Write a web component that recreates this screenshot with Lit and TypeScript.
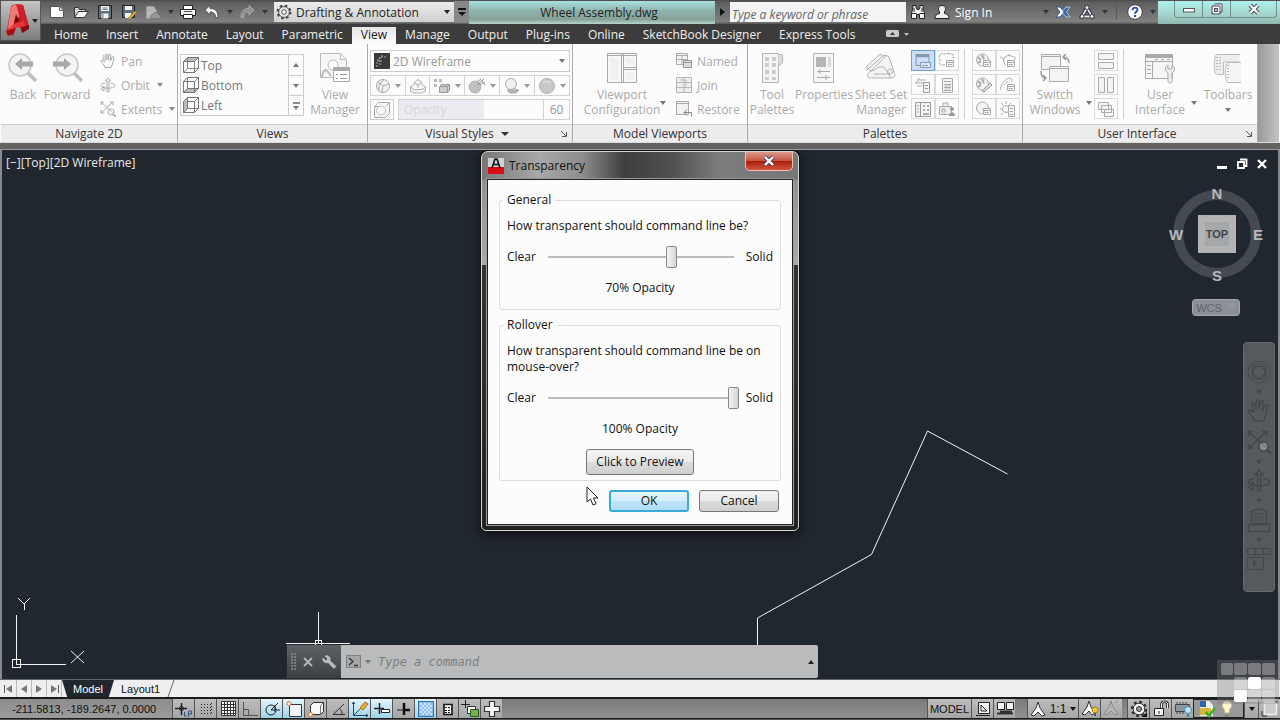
import { LitElement, html, css, svg, nothing, TemplateResult, SVGTemplateResult } from "lit";
import { customElement, state } from "lit/decorators.js";

type Art = SVGTemplateResult;
const panelMini = svg`<path d="M8.5 8.5h7v6h-7zM8.5 10.5h7M10 12.5h4" fill="#fafafa" stroke="#aaa"/>`;

const ICONS: Record<string, [number, number, Art]> = {
  logo: [40, 40, svg`<path d="M6 30L10 5l5-2 7 1 6 22-7 6-3-8-3 2-3 9z" fill="#b8141b"/><path d="M7 27L10 6l5-3 6 1 1 6-5 7-3 1-3 11z" fill="#ee7d7a"/><path d="M15 3l7 1 6 22-6 3z" fill="#cf2028"/><path d="M5 30l8-7 9-3 3 5-11 2-7 7z" fill="#e8353a"/><path d="M5 30l2 5 5-2 3-6z" fill="#a30d13"/><path d="M21 26l7-2v4l-7 4z" fill="#86090e"/><path d="M15 13l3 7-5 2z" fill="#6d0a0e"/><path d="M31 18h6l-3 4z" fill="#222"/>`],
  new: [16, 16, svg`<path d="M1.500 2.500h9l4 4v7h-13z" fill="#fff" stroke="#555"/><path d="M10.500 2.500v4h4" fill="#ddd" stroke="#666"/>`],
  open: [16, 16, svg`<path d="M1.500 13.500v-10h4l1 2h6v3" fill="#cfd6dc" stroke="#333"/><path d="M1.500 13.500l4-6h10l-4 6z" fill="#f4f6f8" stroke="#333"/>`],
  save: [16, 16, svg`<path d="M1.500 1.500h13v13h-13z" fill="#5f6c7a" stroke="#222"/><path d="M4 2h8v5H4zM4.500 9.500h7v5h-7z" fill="#f2f2f2"/><path d="M5.500 4h5M5.500 5.500h5M6 10v4" stroke="#778"/>`],
  saveas: [16, 16, svg`<path d="M1.500 1.500h12v12h-12z" fill="#5f6c7a" stroke="#222"/><path d="M4 2h7v4H4zM4 9h6v5H4z" fill="#f2f2f2"/><path d="M7 14l7-7 1.500 1.500-7 7z" fill="#e8b23a" stroke="#a36c10" stroke-width=".6"/>`],
  cloud: [16, 16, svg`<path d="M1.500 2.500h7l3 4v8h-10z" fill="#b5b5b5" stroke="#999"/><path d="M6 14.500c-1-3 1-4 2-4 1-3 5-2 5 0 3 0 3 4 1 4z" fill="#9b9b9b" stroke="#777"/>`],
  print: [18, 16, svg`<path d="M4.500 5.500v-4h9v4" fill="#fff" stroke="#222"/><path d="M1.500 5.500h15v6h-15z" fill="#f2f2f2" stroke="#222"/><path d="M4.500 10.500h9v4h-9z" fill="#fff" stroke="#222"/><path d="M5 7.500h8" stroke="#555"/>`],
  undo: [16, 16, svg`<path d="M1 6l5-4.500V4.500c5 0 8 2 8 9l-2.500 0c0-4-2-5.500-5.500-5.500v3z" fill="#f2f2f2" stroke="#444" stroke-width=".8"/>`],
  redo: [16, 16, svg`<path d="M15 6l-5-4.500V4.500c-5 0-8 2-8 9l2.500 0c0-4 2-5.500 5.500-5.500v3z" fill="#8e8e8e" stroke="#b5b5b5" stroke-width=".8"/>`],
  gear: [16, 16, svg`<circle cx="8" cy="8" r="6.300" fill="none" stroke="#444" stroke-width="2.200" stroke-dasharray="2.500 2.450"/><circle cx="8" cy="8" r="5.400" fill="#e8e8e8" stroke="#555"/><circle cx="8" cy="8" r="2.300" fill="#f7f7f7" stroke="#555"/>`],
  find: [16, 16, svg`<path d="M1.500 14.500v-5l1.500-6v-2h3v2l1 2h2l1-2v-2h3v2l1.500 6v5h-5v-4h-3v4z" fill="#f4f4f4" stroke="#222"/><path d="M1.500 9.500h5M9.500 9.500h5M4 4v4M12 4v4" stroke="#222"/>`],
  user: [16, 16, svg`<path d="M5.500 8c-2-3-1-6.500 2.500-6.500s4.500 3.500 2.500 6.500l0 1.500c3 .5 4.500 2 4.500 5H1c0-3 1.500-4.500 4.500-5z" fill="#eee" stroke="#222"/>`],
  xchg: [16, 16, svg`<path d="M1 3h4l3 3.500 1 1.500-1 1.500L5 13H1l4-5z" fill="#fff" stroke="#33508f"/><path d="M15 3h-4L8 6.500 7.500 8 8 9.500l3 3.500h4l-3.500-5z" fill="#3f66b5" stroke="#dfe8fa" stroke-width=".7"/>`],
  a360: [16, 16, svg`<path d="M8 4L3 12.500h10z" fill="none" stroke="#223" stroke-width="3.500"/><path d="M8 4L3 12.500h10z" fill="none" stroke="#dfe6f5" stroke-width="1.800"/><circle cx="8" cy="3.500" r="2" fill="#fff" stroke="#334"/><circle cx="3" cy="12.500" r="2" fill="#fff" stroke="#334"/><circle cx="13" cy="12.500" r="2" fill="#fff" stroke="#334"/>`],
  help: [16, 16, svg`<circle cx="8" cy="8" r="7.300" fill="#fff" stroke="#444"/><path d="M5.500 6.200c0-3.600 5-3.200 5-.4 0 2-2.500 2-2.500 4" fill="none" stroke="#2756a8" stroke-width="1.900"/><circle cx="8" cy="12" r="1.200" fill="#2756a8"/>`],
  min: [14, 12, svg`<rect x="1.500" y="5.500" width="11" height="3.500" fill="#fff" stroke="#556"/>`],
  restore: [14, 12, svg`<path d="M4.500 1h7.500v8h-2M2 3h8v8H2z" fill="#fff" stroke="#445"/><path d="M4.500 5.500h3v3h-3z" fill="#9cc" stroke="#445"/>`],
  close: [14, 12, svg`<path d="M3 2l8 8M11 2l-8 8" stroke="#445" stroke-width="4.200"/><path d="M3 2l8 8M11 2l-8 8" stroke="#fff" stroke-width="2.400"/>`],
  ribmin: [24, 10, svg`<rect x="0" y="1" width="13" height="7" rx="1.500" fill="#c9c9c9"/><path d="M4 6l2.500-3L9 6z" fill="#333"/><path d="M18 4h5l-2.500 3z" fill="#bbb"/>`],
  back: [32, 32, svg`<circle cx="13" cy="13" r="11" fill="#f4f4f4" stroke="#c8c8c8" stroke-width="1.600"/><path d="M21 21l8 8" stroke="#bdbdbd" stroke-width="3.600"/><path d="M8 12l7-6v3.500h11v5h-11V18z" fill="#a8a8a8"/>`],
  forward: [32, 32, svg`<circle cx="16" cy="13" r="11" fill="#f4f4f4" stroke="#c8c8c8" stroke-width="1.600"/><path d="M23 21l8 8" stroke="#bdbdbd" stroke-width="3.600"/><path d="M20 12l-7-6v3.500H2v5h11V18z" fill="#a8a8a8"/>`],
  hand: [16, 16, svg`<path d="M5 14.500C4 11 1 9.500 1 8s2-1 3.500 1L3 3.500c0-1.500 1.500-1.500 2 0L6 7V2c0-1.500 1.800-1.500 2 0v5l1-5c.3-1.300 2-1 1.800.3L10.300 8l2-4c.7-1.200 2-.5 1.600.8-1 3-1 6.500-3 9.700z" fill="none" stroke="currentColor"/>`],
  orbit: [16, 16, svg`<path d="M8 .800l2.500 3H9v11H7v-11H5.500z" fill="none" stroke="currentColor"/><path d="M5 6C2 6.500 1 7.500 1 8.500c0 3 10 3.500 13 1.500 2-1.500 1-3-3-4M1 12l3-3v5z" fill="none" stroke="currentColor"/>`],
  extents: [16, 16, svg`<path d="M1 1l12 11M13 1L1 12M1 4V1h3M10 1h3v3M1 9v3h3" fill="none" stroke="currentColor"/><circle cx="11" cy="11" r="3" fill="#fff" fill-opacity=".3" stroke="currentColor"/><path d="M13 13l3 3" stroke="currentColor" stroke-width="1.600"/>`],
  cubetop: [16, 16, svg`<path d="M.500 4.500l4-4h11v11l-4 4H.500z" fill="none" stroke="#777"/><path d="M.500 4.500l4-4h11l-4 4z" fill="#bbb" stroke="#777"/><path d="M11.500 4.500v11M4.500 1v10.500h11M4.500 11.500l-4 4" stroke="#888" fill="none"/>`],
  cubebottom: [16, 16, svg`<path d="M.500 15.500l4-4h11l-4 4z" fill="#bbb" stroke="#777"/><path d="M.500 4.500l4-4h11v11l-4 4H.500zM.500 4.500h11l4-4M11.500 4.500v11M4.500 1v10.500" fill="none" stroke="#777"/>`],
  cubeleft: [16, 16, svg`<path d="M.500 4.500l4-4h11v11l-4 4H.500zM.500 4.500h11l4-4M11.500 4.500v11M4.500 11.500h11" fill="none" stroke="#777"/><path d="M.500 4.500l4-4v11l-4 4z" fill="#bbb" stroke="#777"/>`],
  viewmgr: [32, 32, svg`<path d="M1.500 1.500h20l6 6v18h-26zM21.500 1.500v6h6" fill="#f6f6f6" stroke="#bbb"/><path d="M3 25c1-8 4-8 6-5l3 4" stroke="#bbb" fill="none" stroke-width="2"/><circle cx="14" cy="13" r="5" fill="#fff" stroke="#bbb"/><path d="M14.500 15.500h16v14h-16z" fill="#fff" stroke="#aaa"/><path d="M15 17.500h15" stroke="#aaa" stroke-width="3"/><path d="M17 22.500h2m2 0h7M17 26.500h2m2 0h7" stroke="#999"/>`],
  wire: [16, 16, svg`<rect width="16" height="16" fill="#3a3a3a"/><path d="M3 14V8l3-4h7M6 4v9M8 2v3M4 8h4" stroke="#aaa" fill="none" stroke-dasharray="2 1"/>`],
  vs1: [16, 16, svg`<circle cx="8" cy="8" r="6.500" fill="#f2f2f2" stroke="#aaa"/><path d="M8 8L3 4M8 8l-1 6.500M8 8l6-2M4 13c-1-5 1-9 5-11" fill="none" stroke="#aaa"/>`],
  vs2: [18, 16, svg`<path d="M1.500 9l4-3V4L9 1.500 12.500 4v2l4 3v4L13 15H5l-3.500-2zM5.500 4.500L9 7l3.500-2.500M1.500 9L5 11.500h8L16.500 9M9 7v3" fill="#f4f4f4" stroke="#b0b0b0"/>`],
  vs3: [18, 16, svg`<path d="M1 1h3v3H1zM6 1h3v3H6zM1 6h3v3H1z" fill="#bbb"/><path d="M6.500 8.500l2-2h8v6l-2 2h-8zM6.500 8.500h8v6M14.500 8.500l2-2" fill="#ccc" stroke="#999"/>`],
  vs4: [18, 16, svg`<circle cx="7" cy="9" r="6" fill="#c0c0c0" stroke="#b5b5b5"/><path d="M9 7l7-6M11 7l6-3M9 4l4-3M13 2l4 5" stroke="#999"/>`],
  vs5: [16, 16, svg`<circle cx="7" cy="6" r="5.500" fill="#f2f2f2" stroke="#aaa"/><path d="M3 12h12l-3 3H6zM9 10l5 2" fill="#b5b5b5" stroke="#aaa"/>`],
  vs6: [18, 18, svg`<circle cx="9" cy="9" r="7.500" fill="#c8c8c8" stroke="#b0b0b0"/><path d="M5 6c2-2 5-2 7 0" stroke="#ddd" stroke-width="2" fill="none"/>`],
  xray: [18, 18, svg`<path d="M1.500 5.500l4-4h11v11l-4 4h-11z" fill="#f8f8f8" stroke="#aaa"/><circle cx="8" cy="9.500" r="4.500" fill="none" stroke="#bbb"/><path d="M12.500 5.500l4-4M1.500 5.500h4" stroke="#aaa"/>`],
  vconf: [32, 32, svg`<path d="M1.500 1.500h29v29h-29z" fill="#f8f8f8" stroke="#aaa"/><path d="M1.500 3.500h29M15.500 1.500v29M17.500 1.500v29M17.500 15.500h13M17.500 17.500h13" stroke="#aaa"/><path d="M4 6h9v22H4zM20 6h8v7h-8zM20 20h8v8h-8z" fill="#f0f0f0"/>`],
  named: [16, 16, svg`<path d="M.500.500h11v11H.500zM.500 2.500h11M6 2v9M.500 6.500h11" fill="#f4f4f4" stroke="#aaa"/><path d="M7.500 7.500h8v7h-8zM7.500 9.500h8" fill="#ddd" stroke="#999"/>`],
  join: [16, 16, svg`<path d="M.500.500h15v15H.500zM.500 5.500h15M8 .500v15M.500 10.500h15" fill="#eee" stroke="#b5b5b5"/><path d="M4 3h6v6" stroke="#bbb" fill="none"/>`],
  restorevp: [16, 16, svg`<path d="M.500.500h12v13H.500zM.500 2.500h12" fill="#f2f2f2" stroke="#aaa"/><path d="M15.500 15.500v-4H8m3-3l-3 3 3 3" stroke="#888" fill="none"/>`],
  toolpal: [24, 32, svg`<path d="M2.500 1.500h16v29h-16z" fill="#f5f5f5" stroke="#b5b5b5"/><path d="M18.500 2.500h4v8l-4 4" fill="#ddd" stroke="#b5b5b5"/><path d="M5 5h4v4H5zM12 5h4v4h-4zM5 11h4v4H5zM12 11h4v4h-4zM5 18h4v4H5zM12 18h4v4h-4zM5 25h4v3H5zM12 25h4v3h-4z" fill="#ccc"/>`],
  props: [24, 32, svg`<path d="M1.500 1.500h20v29h-20z" fill="#f5f5f5" stroke="#b5b5b5"/><path d="M4 5h10v10H4z" fill="#b5b5b5"/><path d="M16 5h3v10h-3z" fill="#d8d8d8"/><path d="M5 19.500h13M5 25.500h13M8 17v5M14 23v5" stroke="#aaa"/>`],
  sheets: [32, 32, svg`<path d="M1 15L15 2l3 2 3-1 3 2 5 15c2 4 0 6-3 6H5c-4-1-3-5 1-7z" fill="#f4f4f4" stroke="#b0b0b0"/><path d="M3 17L18 4M6 19L21 4M1 19l3-3M5 19c4 0 6-2 9-4h5l7 11M9 22h15c5 0 5-5 1-5-3 0-3 4 0 5" fill="none" stroke="#b0b0b0"/>`],
  cmdp: [18, 18, svg`<path d="M2 2.500h13v11H2z" fill="#c9e0f8" stroke="#8698b0"/><path d="M2 4h13" stroke="#8698b0" stroke-width="2.500"/><path d="M6.500 10.500h10v5h-10zM8 13.500h6" fill="#dfe9f5" stroke="#8698b0"/>`],
  markup: [18, 18, svg`<path d="M2 3c2-3 4 0 5-1 2-2 4 0 5 0 3-1 4 2 3 4M2 3c-2 2 0 4 0 5s-1 4 1 5 3-1 4 0" fill="none" stroke="#999" stroke-dasharray="3 1"/>${panelMini}`],
  dbc: [18, 18, svg`<path d="M3 4h9M1 7h8M3 10h5M4 4l2-2M2 7l2-2" stroke="#aaa"/><path d="M9.500 6.500h6v10h-6zM11 9.500h3M11 12.500h3" fill="#f4f4f4" stroke="#999"/>`],
  calc: [18, 18, svg`<path d="M4.500 2.500h10v14h-10zM6 5.500h7M6 8.500h7M6 11.500h7M6 14.500h7M8 8v7M11 8v7" fill="#f4f4f4" stroke="#aaa"/>`],
  dc: [18, 18, svg`<path d="M1.500 2.500h15v14h-15zM6.500 2.500v14M3 6h2M3 9h2M3 12h2" fill="#f4f4f4" stroke="#999"/><path d="M9 5h2v2H9zM13 5h2v2h-2zM9 9h2v2H9zM13 9h2v2h-2zM9 13h6v2H9z" fill="#aaa"/>`],
  ext: [18, 18, svg`<path d="M1.500 6.500h12v8h-12zM5 6V3h5v3M4 9h3v3H4z" fill="#eee" stroke="#aaa"/><circle cx="14" cy="9" r="2" fill="#999"/><path d="M11 16c0-5 6-5 6 0z" fill="#999"/>`],
  mat: [18, 18, svg`<circle cx="7.500" cy="8" r="6" fill="#f4f4f4" stroke="#aaa"/><path d="M3 5l3 3M7 3l2 4M3 11l3-2" stroke="#aaa" stroke-width="2"/>${panelMini}`],
  teapot: [18, 18, svg`<path d="M1 5c2 0 3 1 4 3M5 6c3-3 7-3 9-1 3-1 3 2 1 3M5 6c-1 3 0 6 2 7M9 4l1-2" fill="none" stroke="#aaa"/>${panelMini}`],
  matpen: [18, 18, svg`<circle cx="7.500" cy="8" r="6" fill="#f4f4f4" stroke="#aaa"/><path d="M3 5l3 3M7 3l2 4M3 11l3-2" stroke="#aaa" stroke-width="2"/><path d="M7 15l8-8 2 2-8 7z" fill="#ddd" stroke="#999"/>`],
  render: [18, 18, svg`<path d="M2 14C0 10 6 3 10 2c3 0 4 3 2 4M5 9l4-4" fill="none" stroke="#aaa"/>${panelMini}`],
  env: [18, 18, svg`<circle cx="7.500" cy="8" r="6" fill="#f4f4f4" stroke="#aaa"/>${panelMini}`],
  sun: [18, 18, svg`<circle cx="7" cy="9" r="3.500" fill="none" stroke="#aaa"/><path d="M7 1v3M1 9h2M2 3l2 2M12 3l-2 2M2 15l2-2" stroke="#aaa"/><path d="M9.500 5.500h6v11h-6zM11 8.500h3M11 11.500h3M11 14.500h3" fill="#f4f4f4" stroke="#aaa"/>`],
  switchw: [32, 32, svg`<path d="M2.500 2.500h19v15h-19zM2.500 4.500h19" fill="#f4f4f4" stroke="#aaa"/><path d="M10.500 14.500h19v15h-19zM10.500 16.500h19" fill="#f4f4f4" stroke="#aaa"/><path d="M30 11c0-4-2-6-6-6m3-3l-3 3 3 3M2 19c0 5 1 7 5 7m-3-3l3 3-3 3" fill="none" stroke="#999" stroke-width="1.500"/>`],
  tileh: [18, 18, svg`<path d="M1.500 1.500h15v6h-15zM1.500 10.500h15v6h-15z" fill="#f4f4f4" stroke="#aaa"/>`],
  tilev: [18, 18, svg`<path d="M1.500 1.500h6v15h-6zM10.500 1.500h6v15h-6z" fill="#f4f4f4" stroke="#aaa"/>`],
  cascade: [18, 18, svg`<path d="M1.500 2.500h10v7h-10zM4.500 5.500h10v7h-10zM7.500 9.500h9v7h-9z" fill="#f4f4f4" stroke="#aaa"/>`],
  ui: [32, 32, svg`<path d="M1.500 2.500h27v24h-27z" fill="#f6f6f6" stroke="#aaa"/><path d="M2 4.500h26" stroke="#aaa" stroke-width="3"/><path d="M1.500 9.500h27M8.500 9.500v17M11 7.500h3M17 7.500h3M23 7.500h3M3 13.500h4M3 17.500h4M3 21.500h4" stroke="#aaa"/><path d="M24 13v4h4v-4c4 2 3 6 0 8v8c0 3-4 3-4 0v-8c-3-2-4-6 0-8z" fill="#eee" stroke="#aaa"/>`],
  toolbars: [32, 32, svg`<path d="M28 2.500H4.500c-3 2-3 20 0 20h7V10h16" fill="#eee" stroke="#bbb"/><path d="M29 10.500H15.500c-3 2-3 19 0 20H29" fill="#f4f4f4" stroke="#bbb"/><path d="M5 5v15M8 5v15M16 13v15" stroke="#bbb" stroke-width="2" stroke-dasharray="1 2"/>`],
  wrench: [16, 16, svg`<path d="M2 4l3 3 2-2-3-3c3-1 6 1 5 4.500l6 6-2 2-6-6C4 9.500 1 7 2 4z" fill="#bbb" stroke="#ddd" stroke-width=".5"/>`],
  prompt: [16, 14, svg`<rect x=".5" y=".5" width="14" height="12" fill="#a5a7a9" stroke="#7f8183"/><path d="M3 3l4 3.500L3 10M8 10.500h4" stroke="#333" fill="none" stroke-width="1.300"/>`],
  wheel: [26, 26, svg`<circle cx="13" cy="13" r="11" fill="none" stroke="currentColor"/><circle cx="13" cy="13" r="6" fill="none" stroke="currentColor" stroke-width="1.500"/><path d="M6 9c3-6 11-6 14 0v8c-3 5-11 5-14 0z" fill="none" stroke="currentColor"/>`],
  motion: [26, 26, svg`<path d="M5.500 3.500c4-3 11-3 15 0v12h-15zM2.500 16.500h21v7h-21z" fill="none" stroke="currentColor" stroke-width="1.500"/><path d="M8 6h10M8 9h10M8 12h10" stroke="currentColor"/>`],
  show: [26, 26, svg`<path d="M1.500 1.500h23v6h-23zM9.500 2v5M17.500 2v5M1.500 10.500h16v12h-16z" fill="none" stroke="currentColor"/><path d="M7 13v6l5-3z" fill="currentColor"/>`],
  s1: [18, 18, svg`<path d="M0 8.500h12M6.500 3v12" stroke="#222" stroke-width="1.500"/><circle cx="6.500" cy="8.500" r="2" fill="none" stroke="#222"/><path d="M9.500 12v4h2M13.500 17v-6h3v3h-3" stroke="#33558a" fill="none"/>`],
  s2: [18, 18, svg`<path d="M4 4.500h10M4 7.500h10M4 10.500h10M4 13.500h10" stroke="#222" stroke-dasharray="1 2"/><path d="M14.500 3v11" stroke="#222" stroke-dasharray="1 2"/>`],
  s3: [18, 18, svg`<path d="M2.500 1.500h14v14h-14zM5.500 2v13M8.500 2v13M11.500 2v13M14.500 2v13M3 4.500h13M3 7.500h13M3 10.500h13M3 13.500h13" fill="#fff" stroke="#333"/>`],
  s4: [18, 18, svg`<path d="M2.500 2v13.500H17M2.500 9.500h5v6" fill="none" stroke="#555"/>`],
  s5: [18, 18, svg`<circle cx="8" cy="10" r="5" fill="none" stroke="#223"/><path d="M8 10h9M8 10l7-7M12 5v7" stroke="#223" fill="none"/>`],
  s6: [18, 18, svg`<path d="M4.500 4.500h12v12h-12z" fill="#f4f4f4" stroke="#334"/><circle cx="4" cy="3.500" r="2" fill="#fff" stroke="#e07020"/>`],
  s7: [18, 18, svg`<path d="M3.500 5.500l3-3h10v9l-3 3h-10z" fill="#fafafa" stroke="#333"/><path d="M13.500 14.500v-9l3-3" fill="none" stroke="#777"/><circle cx="3.500" cy="14.500" r="2" fill="#fff" stroke="#e07020"/>`],
  s8: [18, 18, svg`<path d="M15 4L4 14.500h12M11 9c2 2 2 4 2 5" fill="none" stroke="#333"/>`],
  s9: [18, 18, svg`<path d="M2.500 2v13.500H17M3 15L14 4M1 4l1.500-2L4 4M15 14l2 1.500-2 1.500" stroke="#246" fill="none"/><path d="M9 8l5-6 3 2-5 6z" fill="#e8b23a" stroke="#a36c10"/>`],
  s10: [18, 18, svg`<path d="M1 8.500h10M6.500 3v11" stroke="#222" stroke-width="1.500"/><path d="M8.500 9.500h8v3h-8z" fill="#fff" stroke="#222"/>`],
  s11: [18, 18, svg`<path d="M2 10h6" stroke="#222" stroke-width="1"/><path d="M9 3v12M9 10h6" stroke="#111" stroke-width="2.500"/>`],
  s12: [18, 18, svg`<rect x="1.500" y="1.500" width="15" height="15" fill="#8fbfe8" stroke="#2c72b4"/><path d="M3 4h12M3 8h12M3 12h12" stroke="#cfe4f5" stroke-dasharray="2 2" stroke-width="2"/><path d="M5 6h11M5 10h11M5 14h11" stroke="#cfe4f5" stroke-dasharray="2 2" stroke-width="2"/>`],
  s13: [18, 18, svg`<path d="M5 4.500h8v10H5z" fill="#fff" stroke="#111" stroke-width="1.600"/><path d="M6 7.500h6M6 10.500h6M6 12.500h6" stroke="#111" stroke-dasharray="2 1"/>`],
  s14: [18, 18, svg`<path d="M0 4.500h9M4.500 0v8" stroke="#222"/><path d="M6.500 6.500h8v7h-8z" fill="#fff" stroke="#333"/><path d="M9.500 9.500h8v7h-8z" fill="#6fb24c" stroke="#2d5a1c"/>`],
  s15: [18, 18, svg`<path d="M6.500 1.500h5v5h5v5h-5v5h-5v-5h-5v-5h5z" fill="#f6f6f6" stroke="#333" stroke-width="1.200"/>`],
  m1: [18, 18, svg`<path d="M4.500 2.500h11v11h-11z" fill="#f4f4f4" stroke="#222"/><path d="M7 5v6h6zM2 15.500h14" stroke="#222" fill="none"/>`],
  m2: [18, 18, svg`<path d="M1.500 2.500h7v7h-7zM10.500 2.500h7v7h-7z" fill="#f6f6f6" stroke="#222"/><path d="M1 13.500h16M4 11.500h12" stroke="#333" stroke-width="2"/>`],
  anno: [16, 16, svg`<path d="M8 1l2 6 5 7-3 1-4-4-4 4-3-1 5-7z" fill="#fff" stroke="#333"/>`],
  anno2: [18, 18, svg`<path d="M8 1l2 6 4 6-3 2-3-4-4 4-3-1 5-7z" fill="#fff" stroke="#333"/><circle cx="14" cy="10" r="3" fill="#f4c542" stroke="#a57a10"/><path d="M13 13h2v3h-2z" fill="#557"/>`],
  anno3: [18, 18, svg`<path d="M8 1l2 6 5 7-3 1-4-4-4 4-3-1 5-7zM12 3l3-2" fill="#b5b5b5" stroke="#8a8a8a"/>`],
  gear2: [18, 18, svg`<circle cx="9" cy="9" r="7" fill="none" stroke="#333" stroke-width="2.400" stroke-dasharray="2.800 2.700"/><circle cx="9" cy="9" r="5.800" fill="#f2f2f2" stroke="#333"/><circle cx="9" cy="9" r="2.500" fill="#999" stroke="#333"/><path d="M17 12v5h-5z" fill="#111"/>`],
  lock: [18, 18, svg`<path d="M2.500 8.500h9v7h-9z" fill="#f6f6f6" stroke="#222"/><path d="M9.500 8V4c0-3 6-3 6 0v4" fill="none" stroke="#222" stroke-width="2.600"/><path d="M9.500 8V4c0-3 6-3 6 0v4" fill="none" stroke="#f2f2f2"/><path d="M7 11v3" stroke="#222"/>`],
  hw: [18, 18, svg`<path d="M1.500 4.500h14v7h-14z" fill="#8e979e" stroke="#444"/><path d="M3 2v2M6 2v2M9 2v2M12 2v2M3 12v2M6 12v2M9 12v2" stroke="#444"/><circle cx="14" cy="10" r="3.500" fill="#bfe2fa" stroke="#48a"/><path d="M14 14v3" stroke="#48a" stroke-width="2"/>`],
  tray: [18, 18, svg`<path d="M2 1h9l4 4v11H2z" fill="#e9eef2"/><path d="M2 1h6v6H2z" fill="#2e66a5"/><path d="M2 8h11v7H2z" fill="#d7b63e"/><path d="M8 12l3 4 6-8" stroke="#3fae2a" fill="none" stroke-width="2.600"/>`],
  bulb: [14, 18, svg`<path d="M7 1c5 0 6 5 3 8l-1 4H5L4 9C1 6 2 1 7 1z" fill="#fff3cf" stroke="#c9b98a"/><path d="M5 14h4v3H5z" fill="#888"/>`],
  clean: [18, 16, svg`<path d="M3.500 1.500h12v12h-12z" fill="#ccc" stroke="#eee" stroke-width="1.500"/><path d="M1 15h5M1 10v5M17 1h-3" stroke="#333"/>`],
  acad: [16, 16, svg`<rect width="16" height="9" fill="#cfd2d2"/><rect y="9" width="16" height="7" fill="#d80c12"/><path d="M4 10L7 1h2l3 9M5.500 6.500h5" stroke="#111" fill="none" stroke-width="1.600"/>`],
  docmin: [12, 12, svg`<path d="M1 9.500h10" stroke="#fff" stroke-width="3"/>`],
  docres: [12, 12, svg`<path d="M4 1.500h6.500V8H8.500M2 4h6v6H2z" fill="none" stroke="#fff" stroke-width="1.800"/>`],
  docclose: [12, 12, svg`<path d="M2 2l8 8M10 2l-8 8" stroke="#fff" stroke-width="2.300"/>`],
  launch: [8, 8, svg`<path d="M1 1l5 5M6.500 2v4.500H2" stroke="#555" fill="none"/>`],
  grip: [5, 18, svg`<path d="M1 0v18M4 0v18" stroke="#8c8f92" stroke-width="1.500" stroke-dasharray="2 1"/>`],
  x: [12, 12, svg`<path d="M2 2l8 8M10 2l-8 8" stroke="#b5b7b9" stroke-width="1.800"/>`],
  first: [16, 16, svg`<path d="M3.500 4v8" stroke="#555"/><path d="M11 4v8L5 8z" fill="#777"/>`],
  prev: [16, 16, svg`<path d="M11 4v8L5 8z" fill="#777"/>`],
  next: [16, 16, svg`<path d="M5 4v8l6-4z" fill="#777"/>`],
  last: [16, 16, svg`<path d="M12.500 4v8" stroke="#555"/><path d="M5 4v8l6-4z" fill="#777"/>`],
};

const icon = (name: string): TemplateResult => {
  const [w, h, art] = ICONS[name];
  return html`<svg class="icon" width=${w} height=${h} viewBox="0 0 ${w} ${h}" aria-hidden="true">${art}</svg>`;
};

const shared = css`
  * { box-sizing: border-box; }
  button, input, select { font: inherit; color: inherit; margin: 0; }
  button { border: 0; background: none; padding: 0; display: flex; align-items: center; justify-content: center; }
  .icon { display: block; flex: none; }
  .tri { flex: none; width: 0; height: 0; border: 3px solid transparent; border-top: 4px solid currentColor; border-bottom: 0; }
`;

@customElement("title-bar")
class TitleBar extends LitElement {
  static styles = [shared, css`
    :host { display: flex; background: #3c3c3c; color: #fff; }
    .logo { width: 41px; height: 41px; background: linear-gradient(#c4c4c4, #7d7d7d); border: 1px solid #555; }
    .rows { flex: 1; min-width: 0; }
    .bar { display: flex; height: 24px; background: linear-gradient(#4c4c4c, #606060 12%, #808080 90%, #555); align-items: center; }
    .qat { display: flex; align-items: center; padding: 0 4px; color: #333; }
    .qat button { width: 24px; height: 22px; }
    .more { width: 11px; display: flex; justify-content: center; }
    .workspace { display: flex; align-items: center; gap: 4px; width: 180px; height: 20px; padding: 0 4px 0 2px; background: linear-gradient(#ececec, #d0d0d0); color: #222; }
    .workspace select, .doc { font-size: 12px; }
    .workspace select { flex: 1; min-width: 0; border: 0; padding: 0; appearance: none; background: none; }
    .custom { width: 15px; height: 22px; color: #111; background: #888; flex-direction: column; gap: 2px; }
    .custom b { width: 8px; height: 2px; background: #111; }
    .custom .tri { border-width: 4px; border-bottom: 0; }
    .doc { flex: 243 1 0; height: 23px; margin: 0; padding-left: 14px; font-weight: 400; text-align: center; line-height: 24px; color: #222; background: linear-gradient(#a9e2e1, #8fb5ae 40%, #86a299 80%, #b8d5cd); }
    .go { width: 15px; height: 22px; }
    .go i { border: 4px solid transparent; border-left: 5px solid #111; border-right: 0; }
    .search { flex: 180 1 0; min-width: 0; height: 20px; border: 0; border-radius: 0; padding: 4px 2px 0; background: #f4f4f4; color: #555; font-size: 12px; font-style: italic; }
    .search::placeholder { color: #666; opacity: 1; }
    .account { display: flex; align-items: center; width: 252px; color: #333; }
    .account button { width: 24px; height: 22px; }
    .account .sign { color: #fff; width: auto; font-size: 12px; padding: 0 0 0 1px; margin-right: auto; }
    .rule { width: 1px; height: 16px; background: #5a5a5a; margin: 0 6px; }
    .win { display: flex; width: 122px; height: 23px; align-items: flex-start; justify-content: center; padding: 0 3px 0 16px; background: linear-gradient(#aef0ef, #a3d3cb 60%, #8fb8b0); }
    .win button { height: 17px; flex: 28; border: 1px solid #718f8c; border-top: 0; }
    .win button:first-child { border-radius: 0 0 0 4px; border-right: 0; }
    .win button:last-child { flex: 46; border-left: 0; border-radius: 0 0 4px 0; }
    .tabs { display: flex; height: 20px; align-items: stretch; padding-left: 4px; }
    .tabs button { font-size: 12px; padding: 0 9px; color: #f0f0f0; white-space: nowrap; }
    .tabs .on { background: linear-gradient(#e6e6e6, #fcfcfc); color: #222; margin-top: 3px; padding-bottom: 3px; }
    .tabs .mini { padding: 0 22px; }
  `];
  @state() tab = "View";
  render() {
    const q = (n: string, label: string) => html`<button aria-label=${label}>${icon(n)}</button>`;
    const more = html`<span class="more"><i class="tri"></i></span>`;
    return html`
      <button class="logo" aria-label="Application menu">${icon("logo")}</button>
      <div class="rows">
        <div class="bar">
          <div class="qat">${q("new", "New")}${q("open", "Open")}${q("save", "Save")}${q("saveas", "Save As")}${q("cloud", "Cloud")}${more}${q("print", "Plot")}${q("undo", "Undo")}${more}${q("redo", "Redo")}${more}</div>
          <label class="workspace">${icon("gear")}<select aria-label="Workspace"><option>Drafting &amp; Annotation</option></select><i class="tri"></i></label>
          <button class="custom" aria-label="Customize"><b></b><i class="tri"></i></button>
          <h1 class="doc">Wheel Assembly.dwg</h1>
          <button class="go" aria-label="Expand search"><i></i></button>
          <input class="search" aria-label="Search" placeholder="Type a keyword or phrase">
          <div class="account">${q("find", "Search")}${q("user", "Account")}<button class="sign">Sign In</button>${more}${q("xchg", "Exchange")}${q("a360", "Connect")}${more}<i class="rule"></i>${q("help", "Help")}${more}</div>
          <div class="win">${q("min", "Minimize")}${q("restore", "Restore")}${q("close", "Close")}</div>
        </div>
        <nav class="tabs">
          ${["Home", "Insert", "Annotate", "Layout", "Parametric", "View", "Manage", "Output", "Plug-ins", "Online", "SketchBook Designer", "Express Tools"].map(t =>
            html`<button class=${t === this.tab ? "on" : ""} @click=${() => (this.tab = t)}>${t}</button>`)}
          <button class="mini" aria-label="Minimize ribbon">${icon("ribmin")}</button>
        </nav>
      </div>`;
  }
}

@customElement("ribbon-bar")
class RibbonBar extends LitElement {
  static styles = [shared, css`
    :host { display: grid; grid-template-columns: 177fr 190fr 205fr 175fr 275fr 235fr 21px; padding: 0 1px; font-size: 12px; color: #aaa; background: #fcfcfc; border-bottom: 1px solid #ddd; }
    .panel { display: flex; flex-direction: column; border-right: 1px solid #a9a9a9; min-width: 0; }
    .body { display: flex; align-items: flex-start; height: 80px; padding: 5px 0 0 1px; }
    .title { display: flex; align-items: center; justify-content: center; gap: 6px; height: 18px; margin: 0; font-size: 12px; line-height: 16px; font-weight: 400; color: #333; background: #ececec; border-top: 1px solid #ccc; }
    .title .launch { margin: 0 4px 0 -12px; }
    .title .text { flex: 1; display: flex; align-items: center; justify-content: center; gap: 7px; }
    .title .tri { border-width: 4px; border-bottom: 0; }
    .end { background: linear-gradient(90deg, #999, #c4c4c4); }
    .big { flex-direction: column; justify-content: flex-start; gap: 3px; padding-top: 3px; line-height: 15px; flex: none; text-align: center; }
    .icon { color: #aaa; }
    .w42 { width: 42px; } .w46 { width: 46px; } .w56 { width: 56px; } .w58 { width: 58px; } .w62 { width: 62px; } .w76 { width: 76px; }
    .drop { align-self: center; margin-top: 32px; color: #777; }
    .under { color: #777; margin-top: 3px; }
    .col { display: flex; flex-direction: column; flex: none; }
    .col.lead { padding-left: 10px; }
    .col.near { padding-left: 10px; }
    .row { height: 24px; gap: 5px; justify-content: flex-start; }
    .row .tri { margin-left: 2px; color: #888; }
    .list { display: grid; grid-template-columns: 1fr 15px; width: 124px; height: 62px; margin: 5px 0 0 1px; border: 1px solid #ccc; color: #777; }
    .list .row { height: 20px; gap: 2px; padding-left: 2px; }
    .scroll { display: grid; grid-template-rows: repeat(3, 1fr); border-left: 1px solid #ccc; }
    .scroll button + button { border-top: 1px solid #ccc; }
    .scroll button { flex-direction: column; gap: 2px; }
    .scroll b { width: 7px; height: 2px; background: #888; }
    .up { transform: rotate(180deg); }
    .styles { flex: 1; margin: 1px 2px 0 1px; display: grid; gap: 3px; grid-template-rows: 22px 21px 21px; }
    .combo { display: flex; align-items: center; gap: 3px; padding: 0 4px 0 3px; border: 1px solid #ccc; color: #999; }
    .combo select { flex: 1; min-width: 0; border: 0; padding: 0; appearance: none; background: none; }
    .combo .tri { color: #777; }
    .tools { display: grid; grid-template-columns: 35fr 24fr 35fr 35fr 35fr 34fr; border: 1px solid #d2d2d2; }
    .tools button { gap: 4px; border-right: 1px solid #d2d2d2; color: #999; }
    .tools button:last-child { border-right: 0; }
    .opacity { display: flex; gap: 4px; }
    .opacity button { width: 24px; border: 1px solid #ccc; }
    .field { flex: 1; display: flex; border: 1px solid #d2d2d2; line-height: 19px; }
    .fill { flex: 1; padding-left: 5px; color: #d5d6dc; background: linear-gradient(90deg, #ebecf2 59%, #fcfcfc 59%); }
    .field input { width: 26px; border: 0; border-left: 1px solid #d2d2d2; padding: 0; text-align: center; color: #999; background: none; }
    .cells { display: grid; gap: 3px 0; grid-template-columns: repeat(2, 24px); margin: 1px 0 0 2px; flex: none; }
    .cells.one { grid-template-columns: 24px; }
    .cells button { height: 21px; border: 1px solid #dadada; }
    .cells .on { background: #c9e0f8; border-color: #6d9fd2; }
    .rule { width: 1px; height: 70px; background: #ccc; margin: 0 5px; flex: none; }
  `];
  big(name: string, w: string, lines: string[], under = false) {
    return html`<button class="big ${w}">${icon(name)}<span>${lines.map((l, i) => html`${i ? html`<br>` : nothing}${l}`)}</span>${under ? html`<i class="tri under"></i>` : nothing}</button>`;
  }
  row(name: string, label: string, drop = false) {
    return html`<button class="row">${icon(name)}<span>${label}</span>${drop ? html`<i class="tri"></i>` : nothing}</button>`;
  }
  cells(names: string[], cls = "") {
    return html`<div class="cells ${cls}">${names.map(n => html`<button class=${n === "cmdp" ? "on" : ""} aria-label=${n}>${icon(n)}</button>`)}</div>`;
  }
  panel(title: string, body: TemplateResult, drop = false, launch = false) {
    return html`<section class="panel"><div class="body">${body}</div>
      <h2 class="title"><span class="text">${title}${drop ? html`<i class="tri"></i>` : nothing}</span>${launch ? html`<button class="launch" aria-label="Options">${icon("launch")}</button>` : nothing}</h2></section>`;
  }
  render() {
    const drop = html`<i class="tri drop"></i>`;
    return html`
      ${this.panel("Navigate 2D", html`
        ${this.big("back", "w42", ["Back"])}${this.big("forward", "w46", ["Forward"])}
        <div class="col lead">${this.row("hand", "Pan")}${this.row("orbit", "Orbit", true)}${this.row("extents", "Extents", true)}</div>`)}
      ${this.panel("Views", html`
        <div class="list"><div>${this.row("cubetop", "Top")}${this.row("cubebottom", "Bottom")}${this.row("cubeleft", "Left")}</div>
          <div class="scroll"><button aria-label="Up"><i class="tri up"></i></button><button aria-label="Down"><i class="tri"></i></button><button aria-label="More"><b></b><i class="tri"></i></button></div></div>
        ${this.big("viewmgr", "w62", ["View", "Manager"])}`)}
      ${this.panel("Visual Styles", html`
        <div class="styles">
          <label class="combo">${icon("wire")}<select aria-label="Visual style"><option>2D Wireframe</option></select><i class="tri"></i></label>
          <div class="tools">${["vs1", "vs2", "vs3", "vs4", "vs5", "vs6"].map(n => html`<button aria-label=${n}>${icon(n)}${n === "vs2" ? nothing : html`<i class="tri"></i>`}</button>`)}</div>
          <div class="opacity"><button aria-label="X-Ray">${icon("xray")}</button><div class="field"><label class="fill" for="op">Opacity</label><input id="op" value="60"></div></div>
        </div>`, true, true)}
      ${this.panel("Model Viewports", html`
        <div class="col near"></div>${this.big("vconf", "w76", ["Viewport", "Configuration"])}${drop}
        <div class="col lead">${this.row("named", "Named")}${this.row("join", "Join")}${this.row("restorevp", "Restore")}</div>`)}
      ${this.panel("Palettes", html`
        ${this.big("toolpal", "w46", ["Tool", "Palettes"])}${this.big("props", "w58", ["Properties"])}${this.big("sheets", "w56", ["Sheet Set", "Manager"])}
        ${this.cells(["cmdp", "markup", "dbc", "calc", "dc", "ext"])}<i class="rule"></i>${this.cells(["mat", "teapot", "matpen", "render", "env", "sun"])}`)}
      ${this.panel("User Interface", html`
        ${this.big("switchw", "w62", ["Switch", "Windows"])}${drop}${this.cells(["tileh", "tilev", "cascade"], "one")}<i class="rule"></i>
        ${this.big("ui", "w62", ["User", "Interface"])}${drop}${this.big("toolbars", "w62", ["Toolbars"], true)}`, false, true)}
      <div class="end"></div>`;
  }
}

@customElement("transparency-dialog")
class TransparencyDialog extends LitElement {
  static styles = [shared, css`
    :host { display: block; width: 318px; padding: 0 5px 5px; border: 1px solid #d5d5d5; border-radius: 7px 7px 5px 5px; font-size: 12px; line-height: 16px; color: #111;
      background: linear-gradient(90deg, #777, #a8a8a8 18%, #8c8c8c 32%, #3e3e3e 45%, #505050 60%, #7c7c7c 75%, #777) 0 0 / 100% 28px no-repeat, linear-gradient(#8a8a8a, #aaa 30%, #333 30%, #222); box-shadow: 0 0 0 1px #111, 0 3px 10px 2px #0008; }
    header { display: flex; align-items: center; height: 27px; gap: 5px; padding-left: 1px; }
    h2 { flex: 1; margin: 0; font-size: 12px; font-weight: 400; }
    .x { align-self: flex-start; width: 48px; height: 19px; border: 1px solid #f0c0b8; border-top: 0; border-radius: 0 0 5px 5px; background: linear-gradient(#d99a90, #c7523f 50%, #a91d0c 52%, #d0553c); }
    .client { border: 1px solid #222; outline: 1px solid #999; background: #fcfcfc; padding: 12px 11px 12px; }
    fieldset { margin: 0 0 7px; padding: 10px 7px 13px; border: 1px solid #ddd; border-radius: 3px; display: grid; gap: 12px; min-width: 0; }
    fieldset.last { padding-bottom: 5px; margin-bottom: 9px; }
    legend { padding: 0 4px; margin-left: -4px; }
    p { margin: 0; }
    .slide { display: flex; align-items: center; justify-content: space-between; height: 22px; }
    .slide input { appearance: none; width: 197px; height: 22px; background: none; }
    .slide input::-webkit-slider-runnable-track { height: 22px; background: linear-gradient(#bbb, #bbb) center / 186px 2px no-repeat; }
    .slide input::-webkit-slider-thumb { appearance: none; width: 11px; height: 22px; border: 1px solid #888; border-radius: 2px; background: linear-gradient(90deg, #f4f4f4, #d4d4d4); }
    output { text-align: center; }
    .btn { height: 22px; width: 80px; border: 1px solid #777; border-radius: 3px; background: linear-gradient(#f3f3f3, #ebebeb 50%, #dcdcdc 52%, #cfcfcf); }
    .btn.ok { border: 2px solid #3ba9d6; background: linear-gradient(#e6f5fd, #d2edfc 50%, #bfe4fa 52%, #b0dcf5); }
    .btn.wide { width: 108px; height: 26px; justify-self: center; }
    .actions { display: flex; justify-content: flex-end; gap: 10px; padding-right: 2px; }
  `];
  @state() base = 70;
  @state() over = 100;
  slider(v: number, set: (n: number) => void, label: string) {
    return html`<div class="slide"><span>Clear</span><input type="range" min="10" max="100" aria-label=${label} .value=${String(v)} @input=${(e: Event) => set(+(e.target as HTMLInputElement).value)}><span>Solid</span></div>
      <output>${v}% Opacity</output>`;
  }
  render() {
    return html`
      <header>${icon("acad")}<h2>Transparency</h2><button class="x" aria-label="Close">${icon("close")}</button></header>
      <div class="client">
        <fieldset><legend>General</legend><p>How transparent should command line be?</p>
          ${this.slider(this.base, n => (this.base = n), "Command line opacity")}</fieldset>
        <fieldset class="last"><legend>Rollover</legend><p>How transparent should command line be on mouse-over?</p>
          ${this.slider(this.over, n => (this.over = n), "Mouse-over opacity")}<button class="btn wide">Click to Preview</button></fieldset>
        <div class="actions"><button class="btn ok">OK</button><button class="btn">Cancel</button></div>
      </div>`;
  }
}

@customElement("drawing-area")
class DrawingArea extends LitElement {
  static styles = [shared, css`
    :host { display: block; position: relative; overflow: hidden; flex: 1; min-height: 400px; background: #21272f; border: solid #8a8a8a; border-width: 0 2px; color: #e8e8e8; font-size: 12px; }
    .art { position: absolute; inset: 0; width: 100%; height: 100%; }
    .label { position: absolute; left: 4px; top: 5px; line-height: 16px; font-size: 12px; }
    .doc { position: absolute; right: 10px; top: 8px; display: flex; gap: 8px; }
    .cube { position: absolute; right: 14px; top: 32px; width: 96px; }
    .nav { position: absolute; right: 3px; top: 192px; width: 32px; height: 250px; border-radius: 4px; background: #56595e; border: 1px solid #66696e; color: #44474c; display: flex; flex-direction: column; align-items: center; justify-content: space-between; padding: 16px 0 18px; }
    .nav .sm { transform: scale(1.500); }
    .nav button { width: 26px; height: 26px; }
    .dialog { position: absolute; left: 50%; top: 1px; transform: translateX(-50%); }
    .cmd { position: absolute; left: 285px; bottom: 1px; width: 531px; height: 33px; display: flex; border-radius: 2px; overflow: hidden; background: #b9bbbc; }
    .tools { display: flex; width: 54px; align-items: center; background: linear-gradient(#5e6165, #3c3f43); padding-left: 4px; gap: 3px; }
    .tools button { width: 18px; height: 33px; }
    .entry { flex: 1; display: flex; align-items: center; gap: 3px; padding: 0 4px 0 5px; color: #777; }
    .entry input { flex: 1; border: 0; background: none; padding: 0 4px; font: italic 12px "DejaVu Sans Mono", monospace; color: #555; outline: 0; }
    .entry input::placeholder { color: #7c7e80; opacity: 1; }
    .up { transform: rotate(180deg); color: #222; }
    .pointer { position: absolute; left: 584px; top: 336px; }
    .t { font-family: "Liberation Sans", sans-serif; font-weight: 700; font-size: 15px; fill: #b5b7b9; text-anchor: middle; }
    .t.face { font-size: 11px; fill: #444; }
    .t.wcs { font-size: 11px; font-weight: 400; fill: #5f6369; }
  `];
  render() {
    return html`
      <svg class="art" aria-hidden="true">
        <g fill="none" stroke="#f2f2f2" shape-rendering="crispEdges">
          <path d="M14.500 465v49h49M10.500 509.500h8v8h-8zM316.500 462v31M284 493.500h64M313.500 490.500h6v6h-6z"/>
        </g>
        <g fill="none" stroke="#f2f2f2"><path d="M16 448l6 6 6-6M22.500 454v6M69 501l13 12M82 501l-13 12"/>
          <path d="M755.500 496v-28l114-63.500 56-123.500 80 43"/></g>
      </svg>
      <span class="label">[−][Top][2D Wireframe]</span>
      <div class="doc">${["docmin", "docres", "docclose"].map(n => html`<button aria-label=${n}>${icon(n)}</button>`)}</div>
      <svg class="cube" width="96" height="140" viewBox="0 0 96 140" role="img" aria-label="View cube">
        <circle cx="49" cy="52" r="39" fill="none" stroke="#454a52" stroke-width="10"/>
        <rect x="30" y="33" width="38" height="38" fill="#b3b3b3"/><rect x="37" y="40" width="24" height="24" fill="#a5a8aa"/>
        <text class="t" x="49" y="17">N</text><text class="t" x="49" y="99">S</text><text class="t" x="8" y="58">W</text><text class="t" x="90" y="58">E</text>
        <text class="t face" x="49" y="56">TOP</text>
        <rect x="24.500" y="117.500" width="47" height="16" rx="3" fill="#8c9096" stroke="#a5a8ac"/><text class="t wcs" x="41" y="130">WCS</text><path d="M60 122h7l-3.500 5z" fill="none" stroke="#9da1a6"/>
      </svg>
      <div class="nav">
        <button aria-label="Wheel">${icon("wheel")}</button><i class="tri"></i>
        <button aria-label="Pan"><span class="sm">${icon("hand")}</span></button><button aria-label="Zoom"><span class="sm">${icon("extents")}</span></button><i class="tri"></i>
        <button aria-label="Orbit"><span class="sm">${icon("orbit")}</span></button><i class="tri"></i>
        <button aria-label="Look">${icon("motion")}</button><i class="tri"></i><button aria-label="ShowMotion">${icon("show")}</button>
      </div>
      <div class="cmd"><div class="tools">${icon("grip")}<button aria-label="Close">${icon("x")}</button><button aria-label="Customize">${icon("wrench")}</button></div>
        <label class="entry">${icon("prompt")}<i class="tri"></i><input aria-label="Command" placeholder="Type a command"><i class="tri up"></i></label></div>
      <transparency-dialog class="dialog"></transparency-dialog>
      <svg class="pointer" width="14" height="20" viewBox="0 0 14 20" aria-hidden="true"><path d="M1 1v15l3.500-3 2.500 6 3-1.300-2.600-5.700H12z" fill="#fff" stroke="#222"/></svg>`;
  }
}

@customElement("status-area")
class StatusArea extends LitElement {
  static styles = [shared, css`
    :host { display: block; position: relative; font: 12px "Liberation Sans", sans-serif; color: #111; background: #555; padding-bottom: 1px; }
    .layouts { display: flex; height: 18px; padding-left: 2px; background: #eee; border-top: 1px solid #666; }
    .layouts .step { width: 15px; border-right: 1px solid #bbb; overflow: hidden; }
    .layouts .tab { padding: 0 7px; font-size: 11px; }
    .layouts .model { width: 52px; background: #21272f; color: #fff; clip-path: polygon(0 0, 100% 0, 90% 100%, 10% 100%); }
    .bar { display: flex; height: 22px; border: solid #1c1c1c; border-width: 2px 0 1px; background: linear-gradient(#7a7a7a, #8f8f8f); }
    .coords { width: 172px; padding-left: 12px; line-height: 20px; font-size: 11px; background: linear-gradient(#8c8c8c, #9c9c9c); }
    .bar button { width: 22px; flex: none; background: linear-gradient(#bdbdbd, #a6a6a6); border-left: 1px solid #555; }
    .bar .on { background: linear-gradient(#e4f4fa, #9fd3e8); }
    .bar .space { width: 44px; font-size: 11px; } .bar .scale { width: 51px; gap: 4px; }
    .bar .menu { width: 14px; } .bar .last { width: 22px; }
    .fill { flex: 1; } .gap { width: 12px; } .gap.sm { width: 5px; }
    .tray { display: flex; align-items: center; gap: 4px; width: 51px; padding-left: 4px; border: 1px solid #222; background: #999; }
    .mark { position: absolute; right: 1px; bottom: 16px; }
  `];
  render() {
    const on = new Set(["s5", "s6", "s9", "s10", "s12"]);
    const b = (n: string) => html`<button class=${on.has(n) ? "on" : ""} aria-label=${n}>${icon(n)}</button>`;
    return html`
      <div class="layouts">${["first", "prev", "next", "last"].map(n => html`<button class="step" aria-label=${n}>${icon(n)}</button>`)}
        <button class="tab model">Model</button><button class="tab">Layout1</button>
        <svg class="icon" width="10" height="17" viewBox="0 0 10 17"><path d="M1 17L7 0" stroke="#666"/></svg></div>
      <div class="bar"><span class="coords">-211.5813, -189.2647, 0.0000</span>
        ${Array.from({ length: 15 }, (_, i) => b("s" + (i + 1)))}
        <span class="fill"></span><button class="space">MODEL</button>${b("m1")}${b("m2")}<span class="gap"></span>
        <button class="scale">${icon("anno")}1:1<i class="tri"></i></button>${b("anno2")}${b("anno3")}<span class="gap sm"></span>
        ${b("gear2")}${b("lock")}${b("hw")}<span class="tray">${icon("tray")}${icon("bulb")}</span><button class="menu" aria-label="Menu"><i class="tri"></i></button><button class="last" aria-label="Clean screen">${icon("clean")}</button></div>
      <svg class="mark" width="62" height="44" viewBox="0 0 62 44" aria-hidden="true"><rect width="62" height="44" fill="#777" fill-opacity=".35"/>
        <g fill="#fff" fill-opacity=".3"><rect x="4" y="3" width="12" height="12" rx="2"/><rect x="17" y="3" width="13" height="12" rx="2"/><rect x="31" y="3" width="13" height="12" rx="2"/><rect x="45" y="3" width="13" height="12" rx="2"/><rect x="17" y="17" width="13" height="12" rx="2"/><rect x="45" y="17" width="13" height="12" rx="2"/><rect x="31" y="30" width="13" height="12" rx="2"/><rect x="45" y="30" width="13" height="12" rx="2"/></g>
        <rect x="31" y="17" width="13" height="12" rx="2" fill="#fff"/><rect x="17" y="30" width="13" height="12" rx="2" fill="#fff"/></svg>`;
  }
}

@customElement("app-root")
class AppRoot extends LitElement {
  static styles = css`
    :host { display: flex; flex-direction: column; min-height: 100vh; font-family: "Open Sans", "Noto Sans", sans-serif; background: #555; }
    .seam { box-sizing: border-box; height: 7px; background: #626262; border-bottom: 1px solid #999; }
  `;
  render() {
    return html`<title-bar></title-bar><ribbon-bar></ribbon-bar><div class="seam"></div><drawing-area></drawing-area><status-area></status-area>`;
  }
}
